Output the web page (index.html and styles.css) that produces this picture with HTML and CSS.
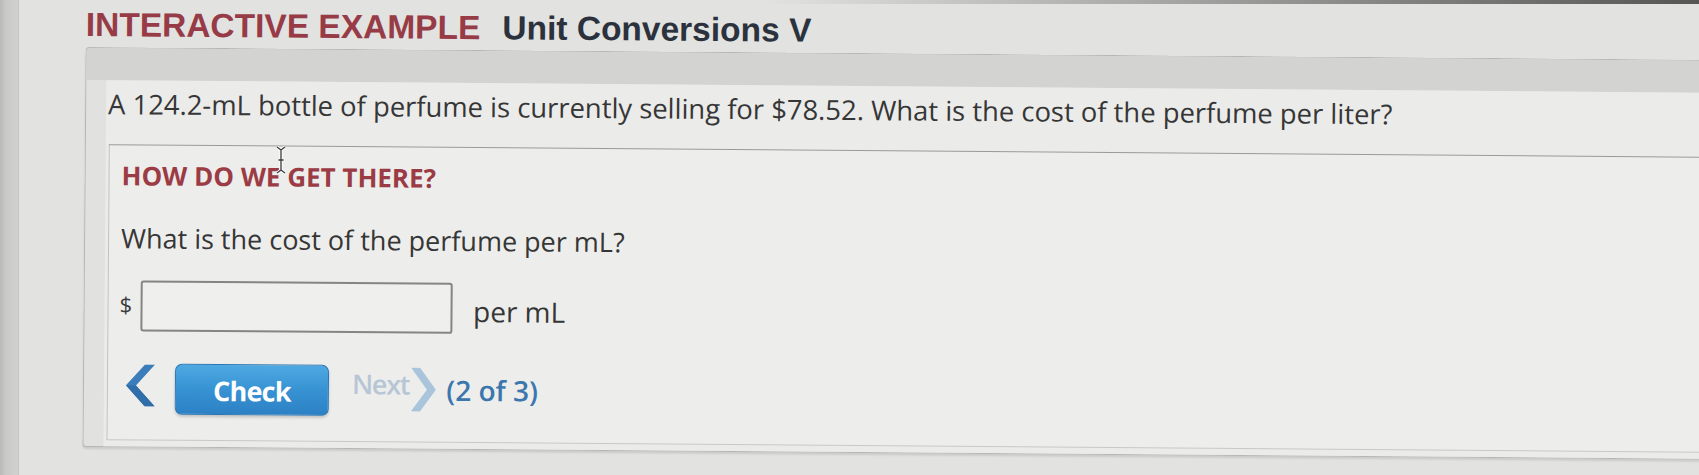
FILE: index.html
```html
<!DOCTYPE html>
<html lang="en">
<head>
<meta charset="utf-8">
<title>Interactive Example - Unit Conversions V</title>
<link rel="stylesheet" href="styles.css">
</head>
<body>
<div class="topstrip"></div>
<div class="screen">
  <div class="edge"></div>
  <div class="page">
    <h1 class="title"><span class="kicker">INTERACTIVE EXAMPLE</span><span class="name">Unit Conversions V</span></h1>
    <div class="panel">
      <div class="band"></div>
      <div class="content">
        <p class="question">A 124.2-mL bottle of perfume is currently selling for $78.52. What is the cost of the perfume per liter?</p>
        <div class="step">
          <h2 class="step-title">HOW DO WE GET THERE?</h2>
          <p class="step-question">What is the cost of the perfume per mL?</p>
          <div class="answer">
            <span class="dollar">$</span>
            <input class="answer-input" type="text" aria-label="cost per mL">
            <span class="unit">per mL</span>
          </div>
          <div class="nav">
            <svg class="chev-left" width="29" height="42" viewBox="0 0 29 42" aria-hidden="true"><path d="M29 0 L19 0 L0 21 L19 42 L29 42 L10 21 Z" fill="#3b7dba"/><path d="M0 21 L19 42 L29 42 L10 21 Z" fill="#2f6ea8"/></svg>
            <button class="check" type="button">Check</button>
            <span class="next">Next</span>
            <svg class="chev-right" width="25" height="44" viewBox="0 0 25 44" aria-hidden="true"><path d="M0 0 L9 0 L25 22 L9 44 L0 44 L16 22 Z" fill="#aac4db"/></svg>
            <span class="count">(2 of 3)</span>
          </div>
        </div>
      </div>
    </div>
  </div>
</div>
<svg class="cursor" width="12" height="28" viewBox="0 0 12 28" aria-hidden="true"><path d="M2 1 L6 4 L10 1 M6 4 L6 24 M2 27 L6 24 L10 27 M3.5 14 L8.5 14" stroke="#fff" stroke-width="3" fill="none"/><path d="M2 1 L6 4 L10 1 M6 4 L6 24 M2 27 L6 24 L10 27 M3.5 14 L8.5 14" stroke="#3a3a3a" stroke-width="1.3" fill="none"/></svg>
</body>
</html>
```

FILE: styles.css
```css
html, body {
  margin: 0;
  padding: 0;
}
body {
  width: 1699px;
  height: 475px;
  overflow: hidden;
  position: relative;
  background: #e2e2e0;
  font-family: "Open Sans", "Liberation Sans", sans-serif;
}
.topstrip {
  position: absolute;
  left: 0;
  top: 0;
  width: 100%;
  height: 4px;
  z-index: 2;
  background: linear-gradient(90deg, rgba(70,70,70,0) 0%, rgba(70,70,70,0) 45%, rgba(70,70,70,0.9) 100%);
}
.screen {
  display: flex;
  height: 475px;
}
.edge {
  width: 18px;
  flex: none;
  position: relative;
  z-index: 1;
  background: linear-gradient(90deg, #b9b9b8 0, #c9c9c8 6px, #d1d1d0 17px);
  border-right: 1px solid #c6c6c5;
}
.page {
  flex: 1;
  padding: 8px 0 0 65px;
  min-width: 0;
  transform: rotate(0.45deg);
  transform-origin: 65px 250px;
}
.title {
  margin: 0;
  display: flex;
  gap: 22px;
  font: bold 33.5px/33px "Liberation Sans", Arial, sans-serif;
}
.kicker {
  color: #973b47;
}
.name {
  color: #2b323d;
}
.panel {
  margin-top: 6px;
  margin-right: -40px;
  border: 1px solid #b6b6b5;
  border-right: none;
  border-radius: 4px 0 0 4px;
  background: #e1e1e0;
  box-shadow: 0 2px 2px rgba(0, 0, 0, 0.10);
}
.band {
  height: 32px;
  background: #d3d3d2;
  border-radius: 3px 0 0 0;
}
.content {
  margin-left: 20px;
  background: #ebebea;
  padding: 7px 0 6px 0;
}
.question {
  margin: 0;
  padding-left: 2px;
  font-size: 27.4px;
  line-height: 34px;
  color: #363636;
}
.step {
  margin: 23px 0 0 3px;
  border-top: 1px solid #9a9a9a;
  border-left: 1px solid #c2c2c1;
  border-bottom: 1px solid #c8c8c7;
  background: #ededec;
  padding: 15px 0 25px 12px;
}
.step-title {
  margin: 0;
  font-size: 26px;
  line-height: 30px;
  font-weight: 700;
  color: #9b3c45;
}
.step-question {
  margin: 31px 0 0 0;
  font-size: 27px;
  line-height: 34px;
  color: #363636;
}
.answer {
  margin-top: 25px;
  display: flex;
  align-items: center;
  height: 51px;
}
.dollar {
  font-size: 22px;
  line-height: 26px;
  color: #3a3a3a;
  margin-left: -1px;
  margin-right: 8px;
  margin-top: -4px;
}
.answer-input {
  box-sizing: border-box;
  width: 312px;
  height: 51px;
  border: 2px solid #858584;
  border-radius: 3px;
  background: #efefee;
  margin: 0 21px 0 0;
  padding: 0 8px;
  font: 24px "Open Sans", sans-serif;
}
.unit {
  align-self: flex-end;
  margin-bottom: 6px;
  font-size: 28px;
  line-height: 34px;
  color: #363636;
}
.nav {
  margin-top: 32px;
  display: flex;
  align-items: flex-start;
  height: 51px;
}
.chev-left {
  margin: 1px 0 0 6px;
  flex: none;
}
.check {
  margin-left: 20px;
  width: 154px;
  height: 51px;
  border: 1px solid #2a77b4;
  border-radius: 7px;
  background: linear-gradient(180deg, #4ea9e2 0%, #3792d3 50%, #2c81c4 100%);
  box-shadow: 0 2px 3px rgba(0, 0, 0, 0.18);
  color: #ffffff;
  font: 700 27px/30px "Open Sans", sans-serif;
  letter-spacing: -0.8px;
  padding: 2px 0 0 0;
}
.next {
  margin: 2px 0 0 23px;
  font-size: 27px;
  line-height: 34px;
  font-weight: 600;
  letter-spacing: -1.2px;
  color: #b7c6d5;
}
.chev-right {
  margin: 2px 0 0 2px;
  flex: none;
}
.count {
  margin: 7px 0 0 10px;
  font-size: 28px;
  line-height: 34px;
  font-weight: 600;
  color: #3b76ad;
}
.cursor {
  position: absolute;
  left: 275px;
  top: 146px;
}
```
